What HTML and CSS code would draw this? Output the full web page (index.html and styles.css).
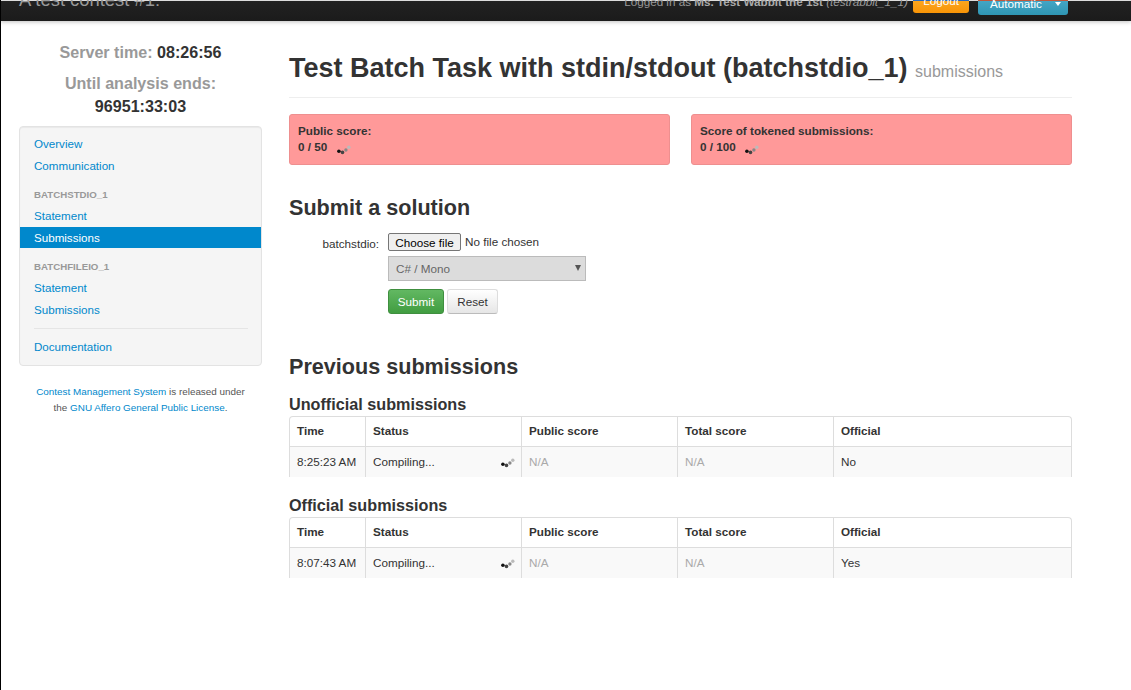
FILE: index.html
```html
<!DOCTYPE html>
<html lang="en">
<head>
<meta charset="utf-8">
<title>Test Batch Task with stdin/stdout (batchstdio_1) submissions</title>
<link rel="stylesheet" href="styles.css">
</head>
<body>
<header class="navbar">
  <div class="brand">A test contest #1:</div>
  <div class="user">
    <span class="logged">Logged in as <strong>Ms. Test Wabbit the 1st</strong> <em>(testrabbit_1_1)</em></span>
    <span class="btn-logout">Logout</span>
    <span class="btn-auto">Automatic<i class="caret"></i></span>
  </div>
</header>
<div class="layout">
  <aside class="sidebar">
    <div class="clock"><span class="lbl">Server time:</span> 08:26:56</div>
    <div class="clock second"><span class="lbl">Until analysis ends:</span></div>
    <div class="clock third">96951:33:03</div>
    <nav class="well">
      <a class="item" href="#">Overview</a>
      <a class="item" href="#">Communication</a>
      <div class="nav-header">BATCHSTDIO_1</div>
      <a class="item" href="#">Statement</a>
      <a class="item active" href="#">Submissions</a>
      <div class="nav-header">BATCHFILEIO_1</div>
      <a class="item" href="#">Statement</a>
      <a class="item" href="#">Submissions</a>
      <div class="divider"></div>
      <a class="item" href="#">Documentation</a>
    </nav>
    <p class="foot"><a href="#">Contest Management System</a> is released under the <a href="#">GNU Affero General Public License</a>.</p>
  </aside>
  <main class="main">
    <div class="page-header"><h1>Test Batch Task with stdin/stdout (batchstdio_1) <small>submissions</small></h1></div>
    <div class="scores">
      <div class="score">
        <div>Public score:</div>
        <div class="val">0 / 50 <svg class="spin sp1" viewBox="0 0 14 10"><use href="#sp"/></svg></div>
      </div>
      <div class="score">
        <div>Score of tokened submissions:</div>
        <div class="val">0 / 100 <svg class="spin sp1" viewBox="0 0 14 10"><use href="#sp"/></svg></div>
      </div>
    </div>
    <h2 class="h-submit">Submit a solution</h2>
    <form class="form">
      <label class="flabel">batchstdio:</label>
      <div class="fields">
        <div class="file"><button type="button" class="choose">Choose file</button><span>No file chosen</span></div>
        <div class="select">C# / Mono<i class="arrow"></i></div>
        <div class="actions"><span class="submit">Submit</span><span class="reset">Reset</span></div>
      </div>
    </form>
    <h2 class="h-prev">Previous submissions</h2>
    <h3 class="h-first">Unofficial submissions</h3>
    <table class="tbl">
      <thead><tr><th class="c1">Time</th><th class="c2">Status</th><th class="c3">Public score</th><th class="c3">Total score</th><th>Official</th></tr></thead>
      <tbody><tr><td>8:25:23 AM</td><td class="st">Compiling...<svg class="spin sp3" viewBox="0 0 14 10"><use href="#sp"/></svg></td><td class="na">N/A</td><td class="na">N/A</td><td>No</td></tr></tbody>
    </table>
    <h3 class="h-next">Official submissions</h3>
    <table class="tbl">
      <thead><tr><th class="c1">Time</th><th class="c2">Status</th><th class="c3">Public score</th><th class="c3">Total score</th><th>Official</th></tr></thead>
      <tbody><tr><td>8:07:43 AM</td><td class="st">Compiling...<svg class="spin sp3" viewBox="0 0 14 10"><use href="#sp"/></svg></td><td class="na">N/A</td><td class="na">N/A</td><td>Yes</td></tr></tbody>
    </table>
  </main>
</div>
<svg class="defs" width="0" height="0" aria-hidden="true"><defs><g id="sp">
  <circle cx="11.8" cy="2.2" r="1.7" fill="#bbb"/><circle cx="8.9" cy="5" r="1.7" fill="#888"/><circle cx="5.5" cy="7.4" r="1.8" fill="#444"/><circle cx="1.9" cy="6.2" r="1.8" fill="#111"/>
</g></defs></svg>
</body>
</html>
```
FILE: styles.css
```css
* { box-sizing: border-box; }
html, body { margin: 0; height: 100%; }
body {
  background: #fff;
  border-left: 1px solid #000;
  font-family: "Liberation Sans", Arial, sans-serif;
  font-size: 11.7px;
  line-height: 18px;
  color: #333;
  overflow: hidden;
}
a { color: #0088cc; text-decoration: none; }
.navbar {
  height: 21px;
  margin-left: -1px;
  background: linear-gradient(#ddd 1px, #222 1px, #1b1b1b);
  box-shadow: 0 1px 4px rgba(0,0,0,.25);
  display: flex;
  justify-content: space-between;
  align-items: flex-end;
  overflow: hidden;
  padding: 0 63px 0 19px;
}
.brand { font-size: 18.4px; line-height: 30px; color: #999; margin-bottom: 6px; white-space: nowrap; }
.user { display: flex; align-items: flex-end; color: #999; font-size: 11.7px; }
.logged { line-height: 18px; margin-bottom: 10px; margin-right: 5px; white-space: nowrap; }
.logged strong { color: #aaa; }
.btn-logout, .btn-auto {
  display: flex; align-items: flex-end; color: #fff; line-height: 18px; padding-bottom: 2px;
}
.btn-logout {
  width: 56px; height: 13px; margin-bottom: 8px; border-radius: 0 0 3px 3px; justify-content: center; padding-bottom: 3px;
  background: linear-gradient(#fba61f, #f89406); border-top: 1px solid #2a6bc0;
}
.btn-auto {
  position: relative;
  width: 90px; height: 15px; margin-left: 9px; margin-bottom: 6px; border-radius: 0 0 3px 3px; padding-left: 12px;
  background: linear-gradient(#44a5c4, #2f96b4); border-top: 1px solid #c0583c;
}
.caret {
  position: absolute; right: 7px; top: 1px;
  border-left: 3px solid transparent; border-right: 3px solid transparent; border-top: 4px solid #fff;
}
.layout { display: flex; padding: 0 0 0 18px; }
.sidebar { width: 243px; flex: none; }
.clock { text-align: center; font-size: 16.1px; font-weight: bold; line-height: 22px; color: #333; }
.clock:first-child { margin-top: 20px; }
.clock .lbl { color: #999; }
.clock.second { margin-top: 9px; }
.clock.third { margin-top: 1px; }
.well {
  margin-top: 9px;
  background: #f5f5f5;
  border: 1px solid #e3e3e3;
  border-radius: 4px;
  padding: 6px 0;
  height: 240px;
  box-shadow: inset 0 1px 1px rgba(0,0,0,.05);
}
.item { display: block; padding: 0 14px; height: 21.6px; line-height: 21px; font-size: 11.6px; }
.item.active { background: #0088cc; color: #fff; }
.nav-header { font-size: 9.7px; font-weight: bold; color: #999; padding: 0 14px; height: 21.5px; line-height: 22px; margin-top: 7.5px; }
.divider { height: 1px; margin: 7px 13px 7px 14px; background: #e5e5e5; }
.foot { margin: 18px 0 0; font-size: 9.9px; line-height: 16px; text-align: center; color: #555; padding: 0 10px; }
.foot a { color: #0088cc; }
.main { width: 783px; margin-left: 27px; flex: none; }
.page-header { border-bottom: 1px solid #eee; height: 77px; padding-top: 27px; }
h1 { margin: 0; font-size: 27px; line-height: 40px; font-weight: bold; color: #333; white-space: nowrap; }
h1 small { font-size: 16px; font-weight: normal; color: #999; }
.scores { display: flex; justify-content: space-between; margin-top: 16px; }
.score {
  width: 381px; height: 51px; background: #ff9999; border: 1px solid #ee8f8f; border-radius: 3px;
  padding: 8px 8px; font-size: 11.7px; font-weight: bold; line-height: 16px; color: #333;
}
.spin { display: inline-block; width: 14px; height: 10px; }
.sp1 { margin: 0 0 -4px 6px; }
h2 { margin: 0; font-size: 21.6px; line-height: 30px; font-weight: bold; color: #333; }
.h-submit { margin-top: 28px; }
.form { display: flex; margin-top: 10px; }
.flabel { width: 90px; padding-top: 3px; text-align: right; font-size: 11.7px; line-height: 16px; color: #333; flex: none; }
.fields { margin-left: 9px; }
.file { display: flex; align-items: center; height: 18px; font-size: 11.7px; color: #333; }
.choose {
  height: 18px; width: 73px; padding: 0; margin-right: 4px; font: 11.7px "Liberation Sans", Arial, sans-serif;
  background: #efefef; border: 1px solid #767676; border-radius: 2px; color: #000;
}
.select {
  position: relative; width: 198px; height: 25px; margin-top: 5px; background: #dcdcdc; border: 1px solid #bbb;
  font-size: 11.7px; line-height: 24px; padding-left: 7px; color: #666;
}
.arrow {
  position: absolute; right: 4px; top: 8px;
  border-left: 3.5px solid transparent; border-right: 3.5px solid transparent; border-top: 6px solid #555;
}
.actions { display: flex; margin-top: 8px; gap: 3px; }
.submit, .reset { height: 25px; border-radius: 3px; font-size: 11.7px; line-height: 23px; text-align: center; }
.submit { width: 56px; border: 1px solid #3f8f3f; color: #fff; background: linear-gradient(#62b862, #419d41); }
.reset { width: 51px; background: linear-gradient(#fff, #e6e6e6); border: 1px solid #ddd; border-bottom-color: #bbb; color: #333; }
.h-prev { margin-top: 38px; }
h3 { margin: 0 0 2px; font-size: 16.2px; line-height: 20px; font-weight: bold; color: #333; }
.h-first { margin-top: 12px; }
.h-next { margin-top: 18px; }
.tbl {
  width: 783px; border-collapse: separate; border-spacing: 0; table-layout: fixed; border: 1px solid #ddd;
  border-bottom: 0; border-radius: 4px 4px 0 0; font-size: 11.7px; margin: 0;
}
.tbl th, .tbl td { padding: 0 7px; text-align: left; border-left: 1px solid #ddd; height: 30px; line-height: 16px; }
.tbl th { font-weight: bold; border-bottom: 1px solid #ddd; padding-bottom: 2px; }
.tbl th:first-child, .tbl td:first-child { border-left: 0; }
.tbl td { background: #f9f9f9; }
.c1 { width: 75px; }
.c2 { width: 156px; }
.c3 { width: 156px; }
.na { color: #aaa; }
.st { position: relative; }
.sp3 { position: absolute; right: 6px; top: 11px; }
.defs { position: absolute; }
```
